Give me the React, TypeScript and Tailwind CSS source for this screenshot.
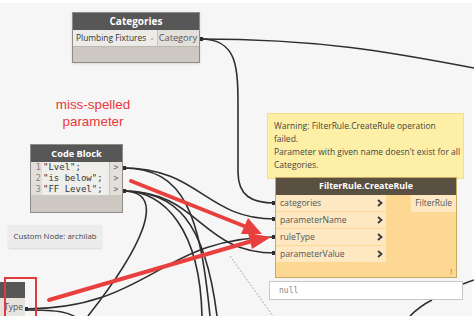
import React from 'react';

const ui = { fontFamily: '"Open Sans", "Noto Sans", sans-serif' };
const mono = { fontFamily: '"DejaVu Sans Mono", "Liberation Mono", monospace' };

const Chevron: React.FC = () => (
  <svg width="6" height="8" viewBox="0 0 6 8" className="shrink-0">
    <path d="M1 1 L4.5 4 L1 7" fill="none" stroke="#3a3a3a" strokeWidth="1.8" />
  </svg>
);

const CategoriesNode: React.FC = () => (
  <div className="absolute left-[72px] top-[12px] w-[128px] border border-[#8f8b85] shadow-sm" style={ui}>
    <div className="h-[17px] bg-[#575757] text-white text-[10px] font-bold flex items-center justify-center">Categories</div>
    <div className="h-[17px] flex border-b border-[#bdb9b2]">
      <div className="w-[84px] bg-[#ecebe7] flex items-center justify-between pl-[3px] pr-[2px] text-[8.4px] text-[#333] whitespace-nowrap">
        <span>Plumbing Fixtures</span>
        <span className="text-[#999] text-[7px]">⌄</span>
      </div>
      <div className="flex-1 bg-[#e3e0db] border-l border-[#c9c5be] flex items-center justify-end pr-[2px] text-[9.2px] text-[#555]">Category</div>
    </div>
    <div className="h-[15px] bg-[#cdc9c2]" />
  </div>
);

const CodeBlockNode: React.FC = () => {
  const lines = ['"Lvel";', '"is below";', '"FF Level";'];
  return (
    <div className="absolute left-[30px] top-[144px] w-[93px] border border-[#8f8b85]" style={ui}>
      <div className="h-[17px] bg-[#575757] text-white text-[9.2px] font-bold flex items-center justify-center">Code Block</div>
      <div className="flex">
        <div className="flex-1 flex flex-col bg-[#efeeea]">
          {lines.map((l, i) => (
            <div key={i} className="h-[11px] flex items-center text-[9px] leading-none text-[#333]" style={mono}>
              <span className="w-[11px] text-right pr-[1px] text-[#888] bg-[#e2dfda] h-full flex items-center justify-end">{i + 1}</span>
              <span className="pl-[1px] whitespace-nowrap">{l}</span>
            </div>
          ))}
        </div>
        <div className="w-[13px] flex flex-col bg-[#e3e0db] border-l border-[#c9c5be]">
          {lines.map((_, i) => (
            <div key={i} className="h-[11px] flex items-center justify-center text-[8px] text-[#666]" style={mono}>&gt;</div>
          ))}
        </div>
      </div>
      <div className="h-[17px] bg-[#cdc9c2]" />
    </div>
  );
};

const FilterRuleNode: React.FC = () => {
  const inputs = ['categories', 'parameterName', 'ruleType', 'parameterValue'];
  return (
    <div className="absolute left-[275px] top-[177px] w-[182px] h-[101px] bg-[#fdd893] border border-[#c9a864] flex flex-col" style={ui}>
      <div className="h-[17px] bg-[#5a5042] text-white text-[8.8px] font-bold flex items-center justify-center">FilterRule.CreateRule</div>
      <div className="flex flex-1">
        <div className="w-[110px] flex flex-col">
          {inputs.map((n) => (
            <div key={n} className="h-[17px] bg-[#fde8c2] border-b border-[#fdd893] flex items-center justify-between pl-[4px] pr-[3px] text-[8.6px] text-[#555]">
              <span>{n}</span>
              <Chevron />
            </div>
          ))}
        </div>
        <div className="flex-1 flex flex-col items-end">
          <div className="h-[17px] px-[4px] bg-[#fde8c2] flex items-center text-[8.4px] text-[#555]">FilterRule</div>
          <div className="flex-1" />
          <div className="text-[7px] leading-none text-[#8a6a30] pr-[4px] pb-[2px]">!</div>
        </div>
      </div>
    </div>
  );
};

const Warning: React.FC = () => (
  <div className="absolute left-[267px] top-[113px] w-[197px] h-[66px] bg-[#fdf0a6] border border-[#f1df8c] px-[6px] pt-[5px] text-[8.5px] leading-[13px] text-[#444] whitespace-nowrap" style={ui}>
    <div>Warning: FilterRule.CreateRule operation</div>
    <div>failed.</div>
    <div>Parameter with given name doesn't exist for all</div>
    <div>Categories.</div>
    <div className="absolute left-[96px] -bottom-[5px] w-0 h-0 border-l-[5px] border-r-[5px] border-t-[5px] border-l-transparent border-r-transparent border-t-[#fdf0a6]" />
  </div>
);

export default function App() {
  return (
    <div className="w-[474px] h-[316px] relative overflow-hidden bg-white">
      <div className="absolute left-0 top-[3px] w-[472px] h-[313px] bg-[#f6f6f6]" />

      {/* wires */}
      <svg className="absolute inset-0" width="474" height="316" viewBox="0 0 474 316">
        <g fill="none" stroke="#2e2e2e" strokeWidth="1.6">
          <path d="M200 39 C320 39 390 52 474 68" />
          <path d="M200 39 C240 39 238 70 238 120 L238 172 C238 196 252 203 275 203" />
          <path d="M123 168 C200 168 205 219 275 219" />
          <path d="M123 168 C185 168 200 215 210 316" />
          <path d="M123 191 C200 191 200 253 275 253" />
          <path d="M123 191 C175 191 205 220 217 316" />
          <path d="M123 191 C165 191 200 230 202 316" />
          <path d="M123 191 C170 191 140 250 88 316" />
          <path d="M25 309 C150 309 160 237 275 237" />
          <path d="M25 310 C60 310 70 312 80 320" />
          <path d="M463 284 C468 282 471 281 474 280" />
          <path d="M410 316 C416 310 424 304 432 300" />
        </g>
        <path d="M230 256 L273 316" stroke="#7aa87a" strokeWidth="0.8" strokeDasharray="2 1.5" fill="none" />
        <g fill="#2e2e2e">
          <rect x="200" y="37" width="3" height="4" />
          <rect x="123" y="166" width="3" height="4" />
          <rect x="123" y="189" width="3" height="4" />
          <rect x="272" y="201" width="3" height="4" />
          <rect x="272" y="217" width="3" height="4" />
          <rect x="272" y="235" width="3" height="4" />
          <rect x="272" y="251" width="3" height="4" />
          <rect x="25" y="307" width="3" height="4" />
        </g>
      </svg>

      <CategoriesNode />
      <CodeBlockNode />
      <Warning />
      <FilterRuleNode />

      <div className="absolute left-[269px] top-[281px] w-[194px] h-[19px] bg-white border border-[#c8c8c8] flex items-center pl-[9px] text-[8px] text-[#888]" style={mono}>null</div>

      <div className="absolute left-[8px] top-[225px] w-[94px] h-[23px] bg-[#ececec] rounded-[2px] shadow-[0_1px_2px_rgba(0,0,0,0.12)] flex items-center justify-center text-[7.8px] text-[#444]" style={ui}>Custom Node: archilab</div>

      {/* partial node bottom-left */}
      <div className="absolute left-0 top-[282px] w-[25px] h-[34px] flex flex-col" style={ui}>
        <div className="h-[16px] bg-[#575757]" />
        <div className="flex-1 bg-[#e6e3de] flex items-center pl-[4px] text-[8.6px] text-[#555]">Type</div>
      </div>
      <div className="absolute left-[4px] top-[277px] w-[33px] h-[41px] border-2 border-[#e23b3b]" />

      <div className="absolute left-[47px] top-[96px] w-[92px] text-center text-[13.4px] leading-[17px] text-[#e8373c]" style={{ fontFamily: '"Liberation Sans", Arial, sans-serif' }}>
        miss-spelled<br />parameter
      </div>

      {/* red arrows */}
      <svg className="absolute inset-0" width="474" height="316" viewBox="0 0 474 316">
        <g stroke="#e8403f" strokeWidth="4" strokeLinecap="round" fill="#e8403f">
          <line x1="131" y1="181" x2="244" y2="226" />
          <line x1="49" y1="300" x2="252" y2="241" />
        </g>
        <polygon points="262,234 241,234 248,218" fill="#e8403f" />
        <polygon points="271,237 252,249 248,233" fill="#e8403f" />
      </svg>
    </div>
  );
}
